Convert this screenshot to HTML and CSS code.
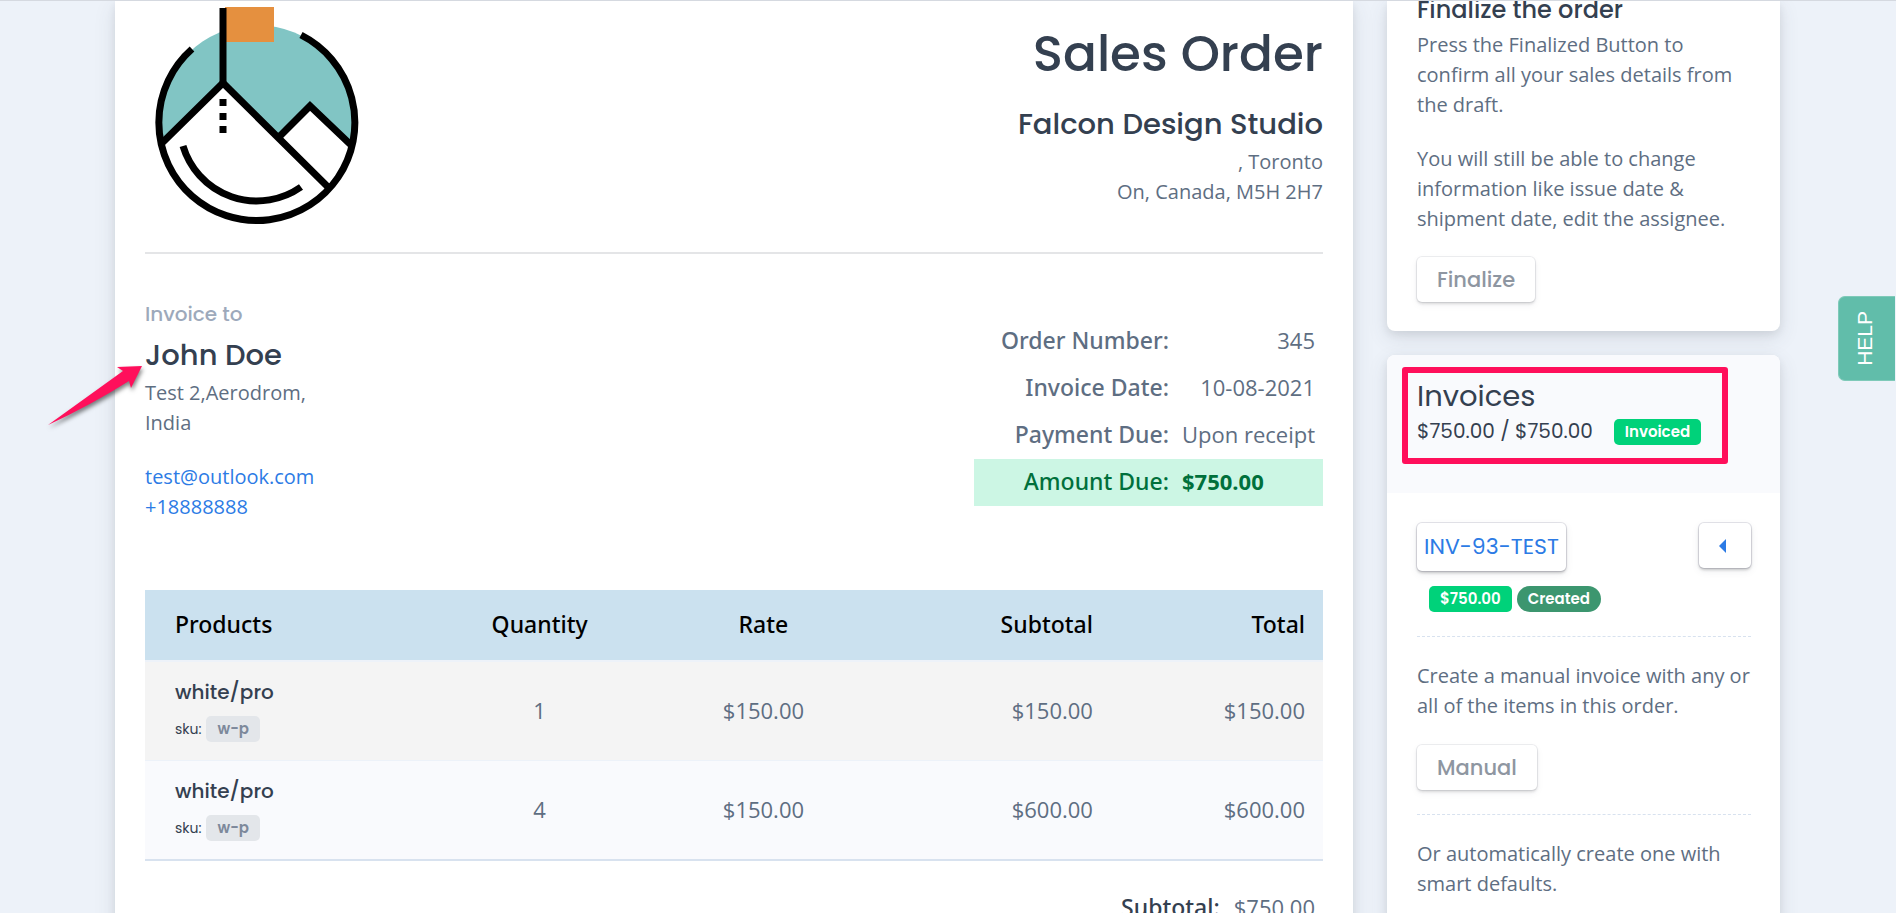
FILE: index.html
```html
<!DOCTYPE html>
<html lang="en">
<head>
<meta charset="utf-8">
<title>Sales Order</title>
<link rel="stylesheet" href="styles.css">
</head>
<body>
<div class="page">
  <div class="layout">
    <main class="sheet">
      <header class="sheet-head">
        <svg class="logo" viewBox="0 1 226 228" role="img" aria-label="Falcon Design Studio logo">
          <circle cx="112" cy="123" r="98" fill="#81c5c4"/>
          <path d="M15 144L78 83L133 136L165 105L206 145A97 97 0 0 1 15 144Z" fill="#fff"/>
          <rect x="80" y="7" width="49" height="35" fill="#e5903f"/>
          <g fill="none" stroke="#000" stroke-width="7">
            <path d="M47 49A98 98 0 1 0 156 35"/>
            <path d="M78 8V84"/>
            <path d="M16 144L78 83L184 188M134 137L165 106L206 145"/>
            <path d="M38 146A77 77 0 0 0 156 187"/>
            <path d="M78 99v7M78 113v7M78 126v7"/>
          </g>
        </svg>
        <div class="company">
          <h1>Sales Order</h1>
          <h2>Falcon Design Studio</h2>
          <p>, Toronto<br>On, Canada, M5H 2H7</p>
        </div>
      </header>
      <section class="details">
        <div class="customer">
          <h3>Invoice to</h3>
          <h2>John Doe</h2>
          <p>Test 2,Aerodrom,<br>India</p>
          <p class="contact"><a href="mailto:test@outlook.com">test@outlook.com</a><br><a href="tel:+18888888">+18888888</a></p>
          <svg class="arrow" viewBox="0 0 100 68" aria-hidden="true"><path d="M2 61L77 7L71 3L96 2L85 24L83 17Q45 41 2 61Z" fill="#ff0f5b"/></svg>
        </div>
        <table class="summary">
          <tr><th scope="row">Order Number:</th><td>345</td></tr>
          <tr><th scope="row">Invoice Date:</th><td>10-08-2021</td></tr>
          <tr><th scope="row">Payment Due:</th><td>Upon receipt</td></tr>
          <tr class="due"><th scope="row">Amount Due:</th><td>$750.00</td></tr>
        </table>
      </section>
      <table class="items">
        <colgroup><col class="c-product"><col class="c-qty"><col class="c-rate"><col class="c-sub"><col class="c-total"></colgroup>
        <thead>
          <tr><th scope="col">Products</th><th scope="col">Quantity</th><th scope="col">Rate</th><th scope="col">Subtotal</th><th scope="col">Total</th></tr>
        </thead>
        <tbody>
          <tr><td><div class="name">white/pro</div><div class="sku">sku: <span class="badge grey">w-p</span></div></td><td>1</td><td>$150.00</td><td>$150.00</td><td>$150.00</td></tr>
          <tr><td><div class="name">white/pro</div><div class="sku">sku: <span class="badge grey">w-p</span></div></td><td>4</td><td>$150.00</td><td>$600.00</td><td>$600.00</td></tr>
        </tbody>
      </table>
      <div class="totals"><span class="label">Subtotal:</span><span>$750.00</span></div>
    </main>
    <aside class="side">
      <section class="card finalize">
        <h2>Finalize the order</h2>
        <p>Press the Finalized Button to confirm all your sales details from the draft.</p>
        <p>You will still be able to change information like issue date &amp; shipment date, edit the assignee.</p>
        <button class="btn muted" type="button">Finalize</button>
      </section>
      <section class="card invoices">
        <header class="card-head">
          <h2>Invoices</h2>
          <div class="amount"><span>$750.00 / $750.00</span><span class="badge green">Invoiced</span></div>
          <div class="highlight"></div>
        </header>
        <div class="card-body">
          <div class="invoice-row">
            <a class="btn invoice-link" href="#invoice">INV-93-TEST</a>
            <button class="btn toggle" type="button" aria-label="Show invoice"><svg viewBox="0 0 7 14"><path d="M7 0V14L0 7Z" fill="#2c7be5"/></svg></button>
          </div>
          <div class="tags"><span class="badge green">$750.00</span><span class="badge pill">Created</span></div>
          <hr>
          <p>Create a manual invoice with any or all of the items in this order.</p>
          <button class="btn muted" type="button">Manual</button>
          <hr>
          <p>Or automatically create one with smart defaults.</p>
        </div>
      </section>
    </aside>
  </div>
  <button class="help" type="button">HELP</button>
</div>
</body>
</html>
```
FILE: styles.css
```css
* { box-sizing: border-box; }
body {
  margin: 0;
  background: #edf2f9;
  color: #5e6e82;
  font: 20px/30px "Open Sans", sans-serif;
}
h1, h2, h3, p { margin: 0; }
h1, h2, h3 { color: #344050; font-family: Poppins, Inter, sans-serif; font-weight: 500; }
a { color: #2c7be5; text-decoration: none; }

.page { height: 100vh; overflow: hidden; padding-right: 1px; border-top: 1px solid #d5d9e0; }
.layout {
  display: grid;
  grid-template-columns: minmax(0, 1fr) 393px;
  gap: 34px;
  max-width: 1665px;
  min-height: 100%;
  margin: 0 auto;
}
.sheet, .card {
  background: #fff;
  box-shadow: 0 7px 20px rgba(65, 69, 88, .13), 0 3px 8px rgba(0, 0, 0, .07);
}
.sheet { padding: 0 30px; }

.sheet-head {
  display: flex;
  justify-content: space-between;
  align-items: flex-start;
  padding-bottom: 23px;
  border-bottom: 2px solid #e4e5e7;
}
.logo { width: 226px; height: 228px; }
.company { padding-top: 23px; text-align: right; }
.company h1 { margin-bottom: 23px; font-size: 50px; line-height: 60px; }
.company h2, .customer h2 { margin-bottom: 6px; font-size: 29px; line-height: 34px; }

.details {
  display: flex;
  justify-content: space-between;
  align-items: center;
  padding: 48px 0 68px;
}
.customer { position: relative; }
.customer h3 { margin-bottom: 12px; color: #9da9bb; font-size: 20px; line-height: 24px; }
.contact { margin-top: 24px; }
.arrow {
  position: absolute;
  top: 62px;
  left: -99px;
  width: 100px;
  height: 68px;
  filter: drop-shadow(1px 3px 2px rgba(0, 0, 0, .5));
}
.summary { min-width: 349px; border-collapse: collapse; font-size: 22px; line-height: 31px; white-space: nowrap; }
.summary th { padding: 7px 8px 9px; text-align: right; font-family: "Noto Sans", sans-serif; font-size: 23px; font-weight: 500; }
.summary td { width: 145px; padding: 7px 8px 9px 5px; text-align: right; }
.summary .due { background: #ccf6e4; color: #00703b; }
.summary .due td { text-align: left; font-weight: 700; }

.items { width: 100%; border-collapse: collapse; table-layout: fixed; font-size: 22px; line-height: 30px; }
.c-product { width: 25%; }
.c-qty { width: 17%; }
.c-rate { width: 21%; }
.c-sub { width: 19%; }
.c-total { width: 18%; }
.items th { padding: 19px 18px 21px; border-bottom: 2px solid #edf2f9; background: #cbe1ef; color: #000; font: 500 23px/30px "Noto Sans", sans-serif; text-align: right; }
.items td { padding: 16px 18px 18px; border-bottom: 1px solid #edf2f9; text-align: right; }
.items th:first-child, .items td:first-child { padding-left: 30px; text-align: left; }
.items th:nth-child(2), .items td:nth-child(2), .items th:nth-child(3), .items td:nth-child(3) { text-align: center; }
.items tbody tr { background: #f4f4f4; }
.items tbody tr:last-child { background: #f9fafd; }
.items tbody tr:last-child td { border-bottom: 2px solid #d8e2ef; }
.name { margin-bottom: 10px; color: #344050; font: 500 20px/28px Poppins, Inter, sans-serif; }
.sku { display: flex; align-items: center; gap: 5px; color: #344050; font: 400 14px/26px Poppins, Inter, sans-serif; }
.totals { display: flex; justify-content: flex-end; gap: 14px; padding: 31px 8px; font-size: 22px; line-height: 31px; }
.totals .label { color: #344050; font-family: "Noto Sans", sans-serif; font-size: 23px; font-weight: 500; }

.badge {
  padding: 0 11px;
  border-radius: 5px;
  color: #fff;
  font: 600 15px/26px Poppins, Inter, sans-serif;
}
.green { background: #00d27a; }
.grey { background: #e3e6ea; color: #7d899b; }
.pill { border-radius: 13px; background: #3c966f; }

.side { display: flex; flex-direction: column; gap: 24px; }
.card { border-radius: 8px; }
.finalize { padding: 0 30px 29px; border-radius: 0 0 8px 8px; }
.finalize h2 { margin-bottom: 11px; font-size: 24px; line-height: 18px; }
.card p { margin-bottom: 24px; }
.finalize p + p { margin-bottom: 23px; }
.card-head { position: relative; padding: 24px 30px 48px; border-radius: 8px 8px 0 0; background: #f9fafd; }
.card-head h2 { margin-bottom: 4px; font-size: 29px; font-weight: 400; line-height: 34px; }
.amount { display: flex; align-items: flex-end; gap: 21px; color: #344050; font: 400 20px/28px Poppins, Inter, sans-serif; }
.highlight {
  position: absolute;
  top: 12px;
  left: 15px;
  width: 326px;
  height: 97px;
  border: 6px solid #ff0f5b;
  border-radius: 3px;
}
.card-body { padding: 30px 29px 0 30px; }
.card-body hr { margin: 24px 0; border: 0; border-top: 1px dashed #d8e2ef; }

.btn {
  display: inline-block;
  height: 45px;
  padding: 0 20px;
  border: 0;
  border-radius: 5px;
  background: #fff;
  box-shadow: 0 0 0 1px rgba(43, 45, 80, .12), 0 2px 3px rgba(0, 0, 0, .2), 0 3px 8px rgba(43, 45, 80, .08);
  font: 500 21px/45px Poppins, Inter, sans-serif;
}
.muted { display: block; color: #8e96a1; box-shadow: 0 0 0 1px rgba(43, 45, 80, .08), 0 2px 3px rgba(0, 0, 0, .13), 0 3px 8px rgba(43, 45, 80, .05); }
.invoice-row { display: flex; justify-content: space-between; align-items: flex-start; }
.invoice-link { height: 48px; padding: 0 7px; font-size: 22px; font-weight: 400; line-height: 48px; }
.toggle { display: flex; align-items: center; justify-content: center; width: 52px; padding: 0 6px 0 0; }
.toggle svg { width: 7px; height: 14px; }
.tags { display: flex; gap: 5px; padding: 15px 12px 0; }

.help {
  position: absolute;
  top: 296px;
  right: 1px;
  width: 57px;
  height: 85px;
  padding: 0 4px 0 0;
  border: 1px solid #7fcab9;
  border-right: 0;
  border-radius: 7px 0 0 7px;
  background: #61bdaa;
  color: #fff;
  font: 21px "Liberation Sans", sans-serif;
  writing-mode: sideways-lr;
  text-align: center;
}
```
